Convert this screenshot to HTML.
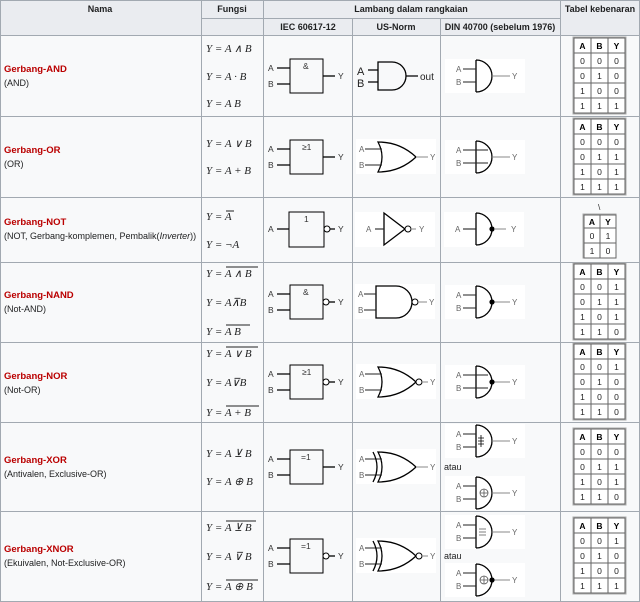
<!DOCTYPE html>
<html><head><meta charset="utf-8"><style>
html,body{margin:0;padding:0;background:#fff}
svg{display:block}
text{font-family:"Liberation Sans",sans-serif;fill:#222}
.h{font-size:9px;font-weight:bold;text-anchor:middle;fill:#202122}
.nm{font-size:9.5px;font-weight:bold;fill:#ba0000}
.sb{font-size:9px;fill:#202122}
.f{font-family:"Liberation Serif",serif;font-style:italic;font-size:11px;fill:#202122}
.l{font-size:8.5px;fill:#333}
.g{font-size:8px;fill:#666}
.t{font-size:8.5px;text-anchor:middle;fill:#222}
.tb{font-size:8.5px;text-anchor:middle;font-weight:bold;fill:#000}
.k{stroke:#000;stroke-width:1.3;fill:none}
.gr{stroke:#888;stroke-width:1;fill:none}
.dk{stroke:#222;stroke-width:1.1;fill:none}
</style></head><body>
<svg width="640" height="602" viewBox="0 0 640 602" xmlns="http://www.w3.org/2000/svg">
<defs>
<g id="iec"><rect x="290" y="-17" width="33" height="34" fill="none" stroke="#000" stroke-width="1"/><path class="k" d="M277 -8H290M277 8H290"/></g>
<g id="din"><rect x="445" y="-17" width="80" height="34" fill="#fff"/><path class="k" d="M476 -16V16M476 -16A16 16 0 0 1 476 16"/><path class="dk" d="M463 -7H476M463 6H476"/><path class="gr" d="M492 0H510"/></g>
<g id="usor"><rect x="356" y="-18" width="80" height="35" fill="#fff"/><path class="k" d="M378 -15Q386 0 378 15Q400 15 416 0Q400 -15 378 -15Z"/><path class="dk" d="M365 -8H382M365 8H382"/></g>
<g id="cell3"><rect x="0" y="0" width="17" height="15" fill="#fff" stroke="#666"/><rect x="17" y="0" width="17" height="15" fill="#fff" stroke="#666"/><rect x="34" y="0" width="17" height="15" fill="#fff" stroke="#666"/></g>
<g id="tt"><rect x="-1" y="-1" width="53" height="77" fill="#fff" stroke="#aaa"/><use href="#cell3"/><use href="#cell3" y="15"/><use href="#cell3" y="30"/><use href="#cell3" y="45"/><use href="#cell3" y="60"/></g>
</defs>
<rect x="0" y="0" width="640" height="35" fill="#eaecf0"/>
<rect x="0" y="35" width="640" height="567" fill="#f8f9fa"/>
<g stroke="#a2a9b1" stroke-width="1" fill="none">
<rect x="0.5" y="0.5" width="639" height="601"/>
<path d="M201.5 0V602M263.5 18V602M352.5 18V602M440.5 18V602M560.5 0V602M263.5 0V18M201 18.5H560M0 35.5H640M0 116.5H640M0 197.5H640M0 262.5H640M0 342.5H640M0 422.5H640M0 511.5H640"/>
</g>
<text class="h" x="100" y="12">Nama</text>
<text class="h" x="232" y="12">Fungsi</text>
<text class="h" x="411" y="12">Lambang dalam rangkaian</text>
<text class="h" x="600" y="12">Tabel kebenaran</text>
<text class="h" x="308" y="30">IEC 60617-12</text>
<text class="h" x="396" y="30">US-Norm</text>
<text class="h" x="500" y="30">DIN 40700 (sebelum 1976)</text>
<text class="nm" x="4" y="72">Gerbang-AND</text><text class="sb" x="4" y="86">(AND)</text>
<text class="nm" x="4" y="153">Gerbang-OR</text><text class="sb" x="4" y="167">(OR)</text>
<text class="nm" x="4" y="225">Gerbang-NOT</text><text class="sb" x="4" y="239">(NOT, Gerbang-komplemen, Pembalik(<tspan font-style="italic">Inverter</tspan>))</text>
<text class="nm" x="4" y="298">Gerbang-NAND</text><text class="sb" x="4" y="312">(Not-AND)</text>
<text class="nm" x="4" y="379">Gerbang-NOR</text><text class="sb" x="4" y="393">(Not-OR)</text>
<text class="nm" x="4" y="463">Gerbang-XOR</text><text class="sb" x="4" y="477">(Antivalen, Exclusive-OR)</text>
<text class="nm" x="4" y="552">Gerbang-XNOR</text><text class="sb" x="4" y="566">(Ekuivalen, Not-Exclusive-OR)</text>
<text class="f" x="206" y="52">Y = A ∧ B</text>
<text class="f" x="206" y="80">Y = A · B</text>
<text class="f" x="206" y="107">Y = A B</text>
<text class="f" x="206" y="147">Y = A ∨ B</text>
<text class="f" x="206" y="174">Y = A + B</text>
<text class="f" x="206" y="220">Y = A</text><path d="M226 211H234" stroke="#202122"/>
<text class="f" x="206" y="248">Y = ¬A</text>
<text class="f" x="206" y="277">Y = A ∧ B</text><path d="M226 267H258" stroke="#202122"/>
<text class="f" x="206" y="306">Y = A⊼B</text>
<text class="f" x="206" y="335">Y = A B</text><path d="M226 325H250" stroke="#202122"/>
<text class="f" x="206" y="357">Y = A ∨ B</text><path d="M226 347H258" stroke="#202122"/>
<text class="f" x="206" y="386">Y = A⊽B</text>
<text class="f" x="206" y="416">Y = A + B</text><path d="M226 406H259" stroke="#202122"/>
<text class="f" x="206" y="457">Y = A ⊻ B</text>
<text class="f" x="206" y="485">Y = A ⊕ B</text>
<text class="f" x="206" y="531">Y = A ⊻ B</text><path d="M226 521H256" stroke="#202122"/>
<text class="f" x="206" y="560">Y = A ⊽ B</text>
<text class="f" x="206" y="590">Y = A ⊕ B</text><path d="M226 580H258" stroke="#202122"/>

<g transform="translate(0,76)">
<use href="#iec"/><path class="k" d="M323 0H335"/>
<text class="l" x="268" y="-5">A</text><text class="l" x="268" y="11">B</text><text class="l" x="338" y="3">Y</text><text class="l" x="303" y="-7">&amp;</text>
<path class="k" d="M378 -14H392A14 14 0 0 1 392 14H378ZM368 -6H378M368 6H378M406 0H418"/>
<text x="357" y="-1" font-size="11" fill="#111">A</text><text x="357" y="11" font-size="11" fill="#111">B</text><text x="420" y="4" font-size="10" fill="#111">out</text>
<use href="#din"/>
<text class="g" x="456" y="-4">A</text><text class="g" x="456" y="9">B</text><text class="g" x="512" y="3">Y</text>
</g>
<g transform="translate(0,157)">
<use href="#iec"/><path class="k" d="M323 0H335"/>
<text class="l" x="268" y="-5">A</text><text class="l" x="268" y="11">B</text><text class="l" x="338" y="3">Y</text><text class="l" x="302" y="-7">≥1</text>
<use href="#usor"/><path class="gr" d="M416 0H428"/>
<text class="g" x="359" y="-5">A</text><text class="g" x="359" y="11">B</text><text class="g" x="430" y="3">Y</text>
<use href="#din"/><path class="dk" d="M476 -7H488M476 6H488"/>
<text class="g" x="456" y="-4">A</text><text class="g" x="456" y="9">B</text><text class="g" x="512" y="3">Y</text>
</g>
<g transform="translate(0,229)">
<rect x="289" y="-17" width="35" height="35" fill="none" stroke="#000"/><path class="k" d="M277 0H289M330 0H335"/>
<circle cx="327" cy="0" r="3" fill="#fff" stroke="#000"/>
<text class="l" x="268" y="3">A</text><text class="l" x="338" y="3">Y</text><text class="l" x="304" y="-7">1</text>
<rect x="355" y="-17" width="80" height="35" fill="#fff"/>
<path class="k" d="M384 -16L405 0L384 16Z"/><circle cx="408" cy="0" r="3" fill="#fff" stroke="#000"/>
<path class="dk" d="M375 0H384"/><path class="gr" d="M411 0H416"/>
<text class="g" x="366" y="3">A</text><text class="g" x="419" y="3">Y</text>
<rect x="444" y="-17" width="80" height="35" fill="#fff"/>
<path class="k" d="M476 -16V16M476 -16A16 16 0 0 1 476 16"/><circle cx="492" cy="0" r="2.6" fill="#000"/>
<path class="dk" d="M463 0H476"/><path class="gr" d="M494 0H506"/>
<text class="g" x="455" y="3">A</text><text class="g" x="511" y="3">Y</text>
<text class="l" x="598" y="-19">\</text>
<rect x="583" y="-15" width="33" height="44" fill="#fff" stroke="#aaa"/>
<g stroke="#666" fill="none"><rect x="584" y="-14" width="16" height="13"/><rect x="600" y="-14" width="16" height="13"/><rect x="584" y="-1" width="16" height="15"/><rect x="600" y="-1" width="16" height="15"/><rect x="584" y="14" width="16" height="15"/><rect x="600" y="14" width="16" height="15"/></g>
<text class="tb" x="592" y="-4">A</text><text class="tb" x="608" y="-4">Y</text>
<text class="t" x="592" y="10">0</text><text class="t" x="608" y="10">1</text>
<text class="t" x="592" y="25">1</text><text class="t" x="608" y="25">0</text>
</g>
<g transform="translate(0,302)">
<use href="#iec"/><circle cx="326" cy="0" r="3" fill="#fff" stroke="#000"/><path class="k" d="M329 0H335"/>
<text class="l" x="268" y="-5">A</text><text class="l" x="268" y="11">B</text><text class="l" x="338" y="3">Y</text><text class="l" x="303" y="-7">&amp;</text>
<rect x="355" y="-18" width="80" height="35" fill="#fff"/>
<path class="k" d="M376 -16H396A16 16 0 0 1 396 16H376Z"/><circle cx="415" cy="0" r="3" fill="#fff" stroke="#000"/>
<path class="dk" d="M364 -8H376M364 8H376"/><path class="gr" d="M418 0H427"/>
<text class="g" x="358" y="-5">A</text><text class="g" x="358" y="11">B</text><text class="g" x="429" y="3">Y</text>
<use href="#din"/><circle cx="492" cy="0" r="2.6" fill="#000"/>
<text class="g" x="456" y="-4">A</text><text class="g" x="456" y="9">B</text><text class="g" x="512" y="3">Y</text>
</g>
<g transform="translate(0,382)">
<use href="#iec"/><circle cx="326" cy="0" r="3" fill="#fff" stroke="#000"/><path class="k" d="M329 0H335"/>
<text class="l" x="268" y="-5">A</text><text class="l" x="268" y="11">B</text><text class="l" x="338" y="3">Y</text><text class="l" x="302" y="-7">≥1</text>
<use href="#usor"/><circle cx="419" cy="0" r="3" fill="#fff" stroke="#000"/><path class="gr" d="M422 0H428"/>
<text class="g" x="359" y="-5">A</text><text class="g" x="359" y="11">B</text><text class="g" x="430" y="3">Y</text>
<use href="#din"/><path class="dk" d="M476 -7H488M476 6H488"/><circle cx="492" cy="0" r="2.6" fill="#000"/>
<text class="g" x="456" y="-4">A</text><text class="g" x="456" y="9">B</text><text class="g" x="512" y="3">Y</text>
</g>
<g transform="translate(0,467)">
<use href="#iec"/><path class="k" d="M323 0H335"/>
<text class="l" x="268" y="-5">A</text><text class="l" x="268" y="11">B</text><text class="l" x="338" y="3">Y</text><text class="l" x="301" y="-7">=1</text>
<use href="#usor"/><path class="k" d="M373 -15Q381 0 373 15"/><path class="gr" d="M416 0H428"/>
<text class="g" x="359" y="-5">A</text><text class="g" x="359" y="11">B</text><text class="g" x="430" y="3">Y</text>
</g>
<g transform="translate(0,441)"><use href="#din"/><path d="M481 -6V6M478 -3H484M478 0H484M478 3H484" stroke="#000" stroke-width="0.8"/>
<text class="g" x="456" y="-4">A</text><text class="g" x="456" y="9">B</text><text class="g" x="512" y="3">Y</text></g>
<text class="sb" x="444" y="470">atau</text>
<g transform="translate(0,493)"><use href="#din"/><circle cx="484" cy="0" r="4" fill="none" stroke="#555" stroke-width="0.8"/><path d="M480 0H488M484 -4V4" stroke="#555" stroke-width="0.8"/>
<text class="g" x="456" y="-4">A</text><text class="g" x="456" y="9">B</text><text class="g" x="512" y="3">Y</text></g>
<g transform="translate(0,556)">
<use href="#iec"/><circle cx="326" cy="0" r="3" fill="#fff" stroke="#000"/><path class="k" d="M329 0H335"/>
<text class="l" x="268" y="-5">A</text><text class="l" x="268" y="11">B</text><text class="l" x="338" y="3">Y</text><text class="l" x="301" y="-7">=1</text>
<use href="#usor"/><path class="k" d="M373 -15Q381 0 373 15"/><circle cx="419" cy="0" r="3" fill="#fff" stroke="#000"/><path class="gr" d="M422 0H428"/>
<text class="g" x="359" y="-5">A</text><text class="g" x="359" y="11">B</text><text class="g" x="430" y="3">Y</text>
</g>
<g transform="translate(0,532)"><use href="#din"/><path d="M479 -3H486M479 0H486M479 3H486" stroke="#555" stroke-width="0.8"/>
<text class="g" x="456" y="-4">A</text><text class="g" x="456" y="9">B</text><text class="g" x="512" y="3">Y</text></g>
<text class="sb" x="444" y="559">atau</text>
<g transform="translate(0,580)"><use href="#din"/><circle cx="484" cy="0" r="4" fill="none" stroke="#555" stroke-width="0.8"/><path d="M480 0H488M484 -4V4" stroke="#555" stroke-width="0.8"/><circle cx="492" cy="0" r="2.6" fill="#000"/>
<text class="g" x="456" y="-4">A</text><text class="g" x="456" y="9">B</text><text class="g" x="512" y="3">Y</text></g>

<g transform="translate(574,38)"><use href="#tt"/>
<text class="tb" x="8.5" y="11">A</text><text class="tb" x="25.5" y="11">B</text><text class="tb" x="42.5" y="11">Y</text>
<text class="t" x="8.5" y="26">0</text><text class="t" x="25.5" y="26">0</text><text class="t" x="42.5" y="26">0</text>
<text class="t" x="8.5" y="41">0</text><text class="t" x="25.5" y="41">1</text><text class="t" x="42.5" y="41">0</text>
<text class="t" x="8.5" y="56">1</text><text class="t" x="25.5" y="56">0</text><text class="t" x="42.5" y="56">0</text>
<text class="t" x="8.5" y="71">1</text><text class="t" x="25.5" y="71">1</text><text class="t" x="42.5" y="71">1</text></g>
<g transform="translate(574,119)"><use href="#tt"/>
<text class="tb" x="8.5" y="11">A</text><text class="tb" x="25.5" y="11">B</text><text class="tb" x="42.5" y="11">Y</text>
<text class="t" x="8.5" y="26">0</text><text class="t" x="25.5" y="26">0</text><text class="t" x="42.5" y="26">0</text>
<text class="t" x="8.5" y="41">0</text><text class="t" x="25.5" y="41">1</text><text class="t" x="42.5" y="41">1</text>
<text class="t" x="8.5" y="56">1</text><text class="t" x="25.5" y="56">0</text><text class="t" x="42.5" y="56">1</text>
<text class="t" x="8.5" y="71">1</text><text class="t" x="25.5" y="71">1</text><text class="t" x="42.5" y="71">1</text></g>
<g transform="translate(574,264)"><use href="#tt"/>
<text class="tb" x="8.5" y="11">A</text><text class="tb" x="25.5" y="11">B</text><text class="tb" x="42.5" y="11">Y</text>
<text class="t" x="8.5" y="26">0</text><text class="t" x="25.5" y="26">0</text><text class="t" x="42.5" y="26">1</text>
<text class="t" x="8.5" y="41">0</text><text class="t" x="25.5" y="41">1</text><text class="t" x="42.5" y="41">1</text>
<text class="t" x="8.5" y="56">1</text><text class="t" x="25.5" y="56">0</text><text class="t" x="42.5" y="56">1</text>
<text class="t" x="8.5" y="71">1</text><text class="t" x="25.5" y="71">1</text><text class="t" x="42.5" y="71">0</text></g>
<g transform="translate(574,344)"><use href="#tt"/>
<text class="tb" x="8.5" y="11">A</text><text class="tb" x="25.5" y="11">B</text><text class="tb" x="42.5" y="11">Y</text>
<text class="t" x="8.5" y="26">0</text><text class="t" x="25.5" y="26">0</text><text class="t" x="42.5" y="26">1</text>
<text class="t" x="8.5" y="41">0</text><text class="t" x="25.5" y="41">1</text><text class="t" x="42.5" y="41">0</text>
<text class="t" x="8.5" y="56">1</text><text class="t" x="25.5" y="56">0</text><text class="t" x="42.5" y="56">0</text>
<text class="t" x="8.5" y="71">1</text><text class="t" x="25.5" y="71">1</text><text class="t" x="42.5" y="71">0</text></g>
<g transform="translate(574,429)"><use href="#tt"/>
<text class="tb" x="8.5" y="11">A</text><text class="tb" x="25.5" y="11">B</text><text class="tb" x="42.5" y="11">Y</text>
<text class="t" x="8.5" y="26">0</text><text class="t" x="25.5" y="26">0</text><text class="t" x="42.5" y="26">0</text>
<text class="t" x="8.5" y="41">0</text><text class="t" x="25.5" y="41">1</text><text class="t" x="42.5" y="41">1</text>
<text class="t" x="8.5" y="56">1</text><text class="t" x="25.5" y="56">0</text><text class="t" x="42.5" y="56">1</text>
<text class="t" x="8.5" y="71">1</text><text class="t" x="25.5" y="71">1</text><text class="t" x="42.5" y="71">0</text></g>
<g transform="translate(574,518)"><use href="#tt"/>
<text class="tb" x="8.5" y="11">A</text><text class="tb" x="25.5" y="11">B</text><text class="tb" x="42.5" y="11">Y</text>
<text class="t" x="8.5" y="26">0</text><text class="t" x="25.5" y="26">0</text><text class="t" x="42.5" y="26">1</text>
<text class="t" x="8.5" y="41">0</text><text class="t" x="25.5" y="41">1</text><text class="t" x="42.5" y="41">0</text>
<text class="t" x="8.5" y="56">1</text><text class="t" x="25.5" y="56">0</text><text class="t" x="42.5" y="56">0</text>
<text class="t" x="8.5" y="71">1</text><text class="t" x="25.5" y="71">1</text><text class="t" x="42.5" y="71">1</text></g>
</svg>
</body></html>
